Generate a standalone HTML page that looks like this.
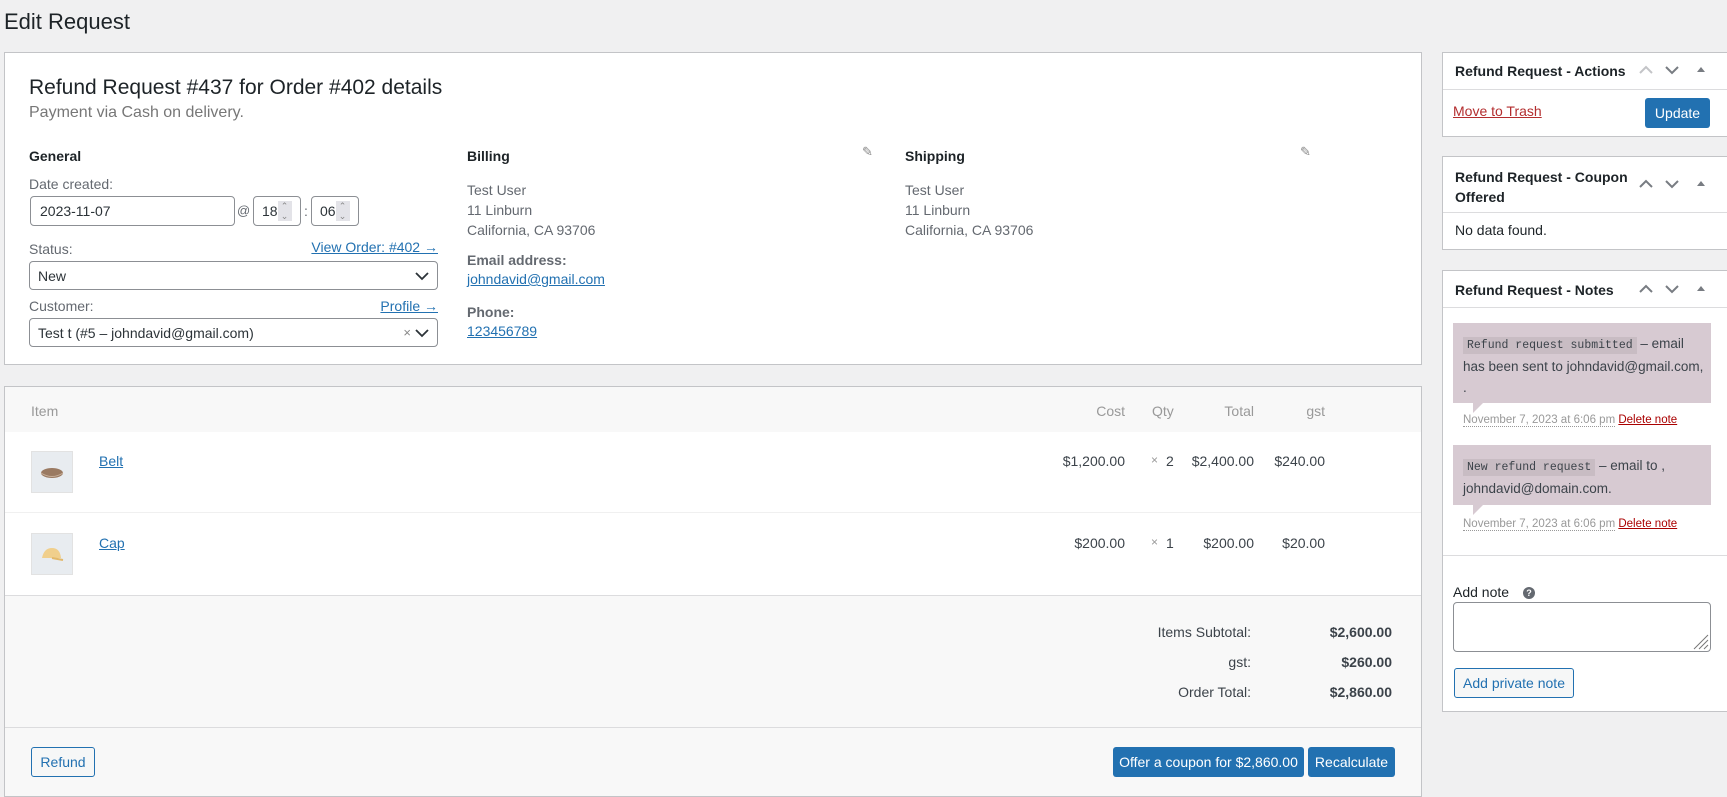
<!DOCTYPE html>
<html><head><meta charset="utf-8"><style>
*{box-sizing:border-box;margin:0;padding:0}
body{width:1727px;height:797px;background:#f0f0f1;font-family:"Liberation Sans",Arial,sans-serif;font-size:14px;color:#3c434a;position:relative;overflow:hidden}
.a{position:absolute;white-space:nowrap}
.box{position:absolute;background:#fff;border:1px solid #c3c4c7}
a,.lnk{color:#2271b1;text-decoration:underline}
.inp{position:absolute;border:1px solid #8c8f94;border-radius:4px;background:#fff;color:#2c3338;padding-left:9px;display:flex;align-items:center}
.gray{color:#646970}
.btn{position:absolute;background:#2271b1;color:#fff;border-radius:3px;display:flex;align-items:center;justify-content:center;font-size:14px}
.btn2{position:absolute;background:#f6f7f7;color:#2271b1;border:1px solid #2271b1;border-radius:3px;display:flex;align-items:center;justify-content:center;font-size:14px}
.hd{font-weight:bold;color:#1d2327;font-size:14px}
.r{text-align:right}
.code{background:#c8bcc3;font-family:"Liberation Mono",monospace;font-size:11.5px;padding:2px 4px;color:#3c434a}
.note{position:absolute;left:1453px;width:258px;background:#d7cad2;color:#3c434a;padding:10px 8px 10px 10px;line-height:21px;font-size:13.5px;white-space:nowrap}
.note:after{content:"";position:absolute;left:20px;bottom:-10px;border-right:10px solid transparent;border-top:10px solid #d7cad2}
.meta{position:absolute;left:1463px;font-size:11.5px;color:#999;white-space:nowrap}
.meta span{border-bottom:1px dotted #999}
.meta b{font-weight:normal;text-decoration:underline;color:#a00}
.arr{position:absolute;color:#787c82;font-size:12px}
.spin{background:#e3e3e8;width:14px;height:20px;font-size:9px;color:#888;line-height:10px;text-align:center;display:inline-block}
</style></head><body>
<div class="a" style="left:4px;top:9px;font-size:22px;color:#1d2327">Edit Request</div>

<div class="box" style="left:4px;top:52px;width:1418px;height:313px"></div>
<div class="a" style="left:29px;top:76px;font-size:21px;color:#1d2327">Refund Request #437 for Order #402 details</div>
<div class="a gray" style="left:29px;top:104px;font-size:16px;color:#777">Payment via Cash on delivery.</div>
<div class="a hd" style="left:29px;top:148px">General</div>
<div class="a gray" style="left:29px;top:176px">Date created:</div>
<div class="inp" style="left:30px;top:196px;width:205px;height:30px">2023-11-07</div>
<div class="a gray" style="left:237px;top:203px;font-size:13px">@</div>
<div class="inp" style="left:253px;top:196px;width:48px;height:30px;padding-left:8px">18<span class="spin">⌃<br>⌄</span></div>
<div class="a gray" style="left:304px;top:203px">:</div>
<div class="inp" style="left:311px;top:196px;width:48px;height:30px;padding-left:8px">06<span class="spin">⌃<br>⌄</span></div>
<div class="a gray" style="left:29px;top:241px">Status:</div>
<div class="a lnk" style="left:300px;width:138px;top:239px;text-align:right">View Order: #402 →</div>
<div class="inp" style="left:29px;top:261px;width:409px;height:29px;padding-left:8px">New<svg style="position:absolute;right:8px;top:9px" width="14" height="10"><path d="M1 2l6 6 6-6" stroke="#2c3338" stroke-width="1.8" fill="none"/></svg></div>
<div class="a gray" style="left:29px;top:298px">Customer:</div>
<div class="a lnk" style="left:358px;width:80px;top:298px;text-align:right">Profile →</div>
<div class="inp" style="left:29px;top:318px;width:409px;height:29px;padding-left:8px">Test t (#5 – johndavid@gmail.com)<span style="position:absolute;right:26px;top:6px;color:#888;font-size:13px">×</span><svg style="position:absolute;right:8px;top:9px" width="14" height="10"><path d="M1 2l6 6 6-6" stroke="#2c3338" stroke-width="1.8" fill="none"/></svg></div>

<div class="a hd" style="left:467px;top:148px">Billing</div>
<div class="a" style="left:862px;top:144px;color:#888;font-size:13px">✎</div>
<div class="a gray" style="left:467px;top:180px;line-height:20px">Test User<br>11 Linburn<br>California, CA 93706</div>
<div class="a gray" style="left:467px;top:252px;font-weight:bold">Email address:</div>
<div class="a lnk" style="left:467px;top:271px">johndavid@gmail.com</div>
<div class="a gray" style="left:467px;top:304px;font-weight:bold">Phone:</div>
<div class="a lnk" style="left:467px;top:323px">123456789</div>
<div class="a hd" style="left:905px;top:148px">Shipping</div>
<div class="a" style="left:1300px;top:144px;color:#888;font-size:13px">✎</div>
<div class="a gray" style="left:905px;top:180px;line-height:20px">Test User<br>11 Linburn<br>California, CA 93706</div>

<div class="box" style="left:4px;top:386px;width:1418px;height:411px;background:#f8f8f8"></div>
<div class="a" style="left:5px;top:432px;width:1416px;height:163px;background:#fff"></div>
<div class="a" style="left:5px;top:512px;width:1416px;height:1px;background:#f0f0f0"></div>
<div class="a" style="left:5px;top:595px;width:1416px;height:1px;background:#dcdcde"></div>
<div class="a" style="left:5px;top:727px;width:1416px;height:1px;background:#dcdcde"></div>
<div class="a" style="left:31px;top:403px;color:#999">Item</div>
<div class="a r" style="left:1025px;width:100px;top:403px;color:#999">Cost</div>
<div class="a" style="left:1152px;top:403px;color:#999">Qty</div>
<div class="a r" style="left:1154px;width:100px;top:403px;color:#999">Total</div>
<div class="a r" style="left:1225px;width:100px;top:403px;color:#999">gst</div>

<div class="a" style="left:31px;top:451px;width:42px;height:42px;background:#e8ecf0;border:1px solid #e2e2e2"><svg width="40" height="40"><ellipse cx="20" cy="21" rx="11" ry="5" fill="#9a7a62"/><path d="M9 21q11 7 22 0" stroke="#c9b09a" fill="none"/></svg></div>
<div class="a lnk" style="left:99px;top:453px">Belt</div>
<div class="a r" style="left:1025px;width:100px;top:453px">$1,200.00</div>
<div class="a" style="left:1151px;top:453px;color:#999;font-size:12px">×</div>
<div class="a" style="left:1166px;top:453px">2</div>
<div class="a r" style="left:1154px;width:100px;top:453px">$2,400.00</div>
<div class="a r" style="left:1225px;width:100px;top:453px">$240.00</div>

<div class="a" style="left:31px;top:533px;width:42px;height:42px;background:#e8ecf0;border:1px solid #e2e2e2"><svg width="40" height="40"><path d="M10 24q2-10 10-10t9 10z" fill="#f0cf8c"/><path d="M20 24l11 2" stroke="#e2b86a" stroke-width="2"/></svg></div>
<div class="a lnk" style="left:99px;top:535px">Cap</div>
<div class="a r" style="left:1025px;width:100px;top:535px">$200.00</div>
<div class="a" style="left:1151px;top:535px;color:#999;font-size:12px">×</div>
<div class="a" style="left:1166px;top:535px">1</div>
<div class="a r" style="left:1154px;width:100px;top:535px">$200.00</div>
<div class="a r" style="left:1225px;width:100px;top:535px">$20.00</div>

<div class="a r" style="left:1051px;width:200px;top:624px">Items Subtotal:</div>
<div class="a r" style="left:1292px;width:100px;top:624px;font-weight:bold">$2,600.00</div>
<div class="a r" style="left:1051px;width:200px;top:654px">gst:</div>
<div class="a r" style="left:1292px;width:100px;top:654px;font-weight:bold">$260.00</div>
<div class="a r" style="left:1051px;width:200px;top:684px">Order Total:</div>
<div class="a r" style="left:1292px;width:100px;top:684px;font-weight:bold">$2,860.00</div>

<div class="btn2" style="left:31px;top:747px;width:64px;height:30px">Refund</div>
<div class="btn" style="left:1113px;top:747px;width:191px;height:30px">Offer a coupon for $2,860.00</div>
<div class="btn" style="left:1308px;top:747px;width:87px;height:30px">Recalculate</div>

<!-- sidebar -->
<div class="box" style="left:1442px;top:52px;width:300px;height:85px"></div>
<div class="a" style="left:1443px;top:89px;width:299px;height:1px;background:#dcdcde"></div>
<div class="a hd" style="left:1455px;top:63px">Refund Request - Actions</div>
<div class="arr" style="left:1638px;top:62px"><svg width="80" height="16"><path d="M2 11l6-6 6 6" stroke="#c3c4c7" stroke-width="2" fill="none"/><path d="M28 5l6 6 6-6" stroke="#787c82" stroke-width="2" fill="none"/><path d="M59 10l4-5 4 5z" fill="#787c82"/></svg></div>
<div class="a" style="left:1453px;top:103px;color:#b32d2e;text-decoration:underline">Move to Trash</div>
<div class="btn" style="left:1645px;top:98px;width:65px;height:30px">Update</div>

<div class="box" style="left:1442px;top:156px;width:300px;height:94px"></div>
<div class="a" style="left:1443px;top:212px;width:299px;height:1px;background:#dcdcde"></div>
<div class="a hd" style="left:1455px;top:167px;line-height:20px">Refund Request - Coupon<br>Offered</div>
<div class="arr" style="left:1638px;top:176px"><svg width="80" height="16"><path d="M2 11l6-6 6 6" stroke="#787c82" stroke-width="2" fill="none"/><path d="M28 5l6 6 6-6" stroke="#787c82" stroke-width="2" fill="none"/><path d="M59 10l4-5 4 5z" fill="#787c82"/></svg></div>
<div class="a" style="left:1455px;top:222px;color:#1d2327">No data found.</div>

<div class="box" style="left:1442px;top:270px;width:300px;height:442px"></div>
<div class="a" style="left:1443px;top:307px;width:299px;height:1px;background:#dcdcde"></div>
<div class="a hd" style="left:1455px;top:282px">Refund Request - Notes</div>
<div class="arr" style="left:1638px;top:281px"><svg width="80" height="16"><path d="M2 11l6-6 6 6" stroke="#787c82" stroke-width="2" fill="none"/><path d="M28 5l6 6 6-6" stroke="#787c82" stroke-width="2" fill="none"/><path d="M59 10l4-5 4 5z" fill="#787c82"/></svg></div>
<div class="note" style="top:323px;height:80px"><span class="code">Refund request submitted</span> – email<br>has been sent to johndavid@gmail.com,<br>.</div>
<div class="meta" style="top:414px"><span>November 7, 2023 at 6:06 pm</span> <b>Delete note</b></div>
<div class="note" style="top:445px;height:60px"><span class="code">New refund request</span> – email to ,<br>johndavid@domain.com.</div>
<div class="meta" style="top:518px"><span>November 7, 2023 at 6:06 pm</span> <b>Delete note</b></div>
<div class="a" style="left:1443px;top:555px;width:299px;height:1px;background:#dcdcde"></div>
<div class="a" style="left:1453px;top:584px;color:#1d2327">Add note</div>
<div class="a" style="left:1523px;top:587px;width:12px;height:12px;border-radius:50%;background:#646970;color:#fff;font-size:9px;font-weight:bold;text-align:center;line-height:12px">?</div>
<div class="a" style="left:1453px;top:602px;width:258px;height:50px;border:1px solid #8c8f94;border-radius:4px;background:#fff"><svg style="position:absolute;right:1px;bottom:1px" width="18" height="18"><path d="M17 3L3 17M17 8L8 17M17 13L13 17" stroke="#777" stroke-width="1"/></svg></div>
<div class="btn2" style="left:1454px;top:668px;width:120px;height:30px">Add private note</div>
</body></html>
